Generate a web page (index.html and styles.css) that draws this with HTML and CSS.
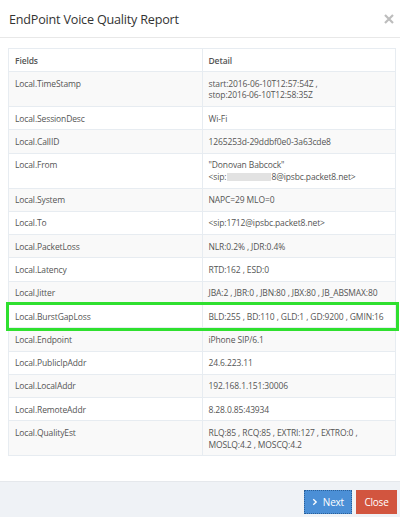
FILE: index.html
```html
<!DOCTYPE html>
<html>
<head>
<meta charset="utf-8">
<link rel="stylesheet" href="styles.css">
</head>
<body>
<div class="modal">
  <div class="modal-header">
    <h4 class="title">EndPoint Voice Quality Report</h4>
    <span class="close"><svg width="10" height="10" viewBox="0 0 10 10"><path d="M1 1L9 9M9 1L1 9" stroke="#bdbdbd" stroke-width="2.2" stroke-linecap="butt"/></svg></span>
  </div>
  <div class="modal-body">
    <table class="report">
      <thead>
        <tr><th>Fields</th><th>Detail</th></tr>
      </thead>
      <tbody>
        <tr><td>Local.TimeStamp</td><td>start:2016-06-10T12:57:54Z ,<br>stop:2016-06-10T12:58:35Z</td></tr>
        <tr><td>Local.SessionDesc</td><td>Wi-Fi</td></tr>
        <tr><td>Local.CallID</td><td>1265253d-29ddbf0e0-3a63cde8</td></tr>
        <tr><td>Local.From</td><td>"Donovan Babcock"<br>&lt;sip:<span class="redact"></span>8@ipsbc.packet8.net&gt;</td></tr>
        <tr><td>Local.System</td><td>NAPC=29 MLO=0</td></tr>
        <tr><td>Local.To</td><td>&lt;sip:1712@ipsbc.packet8.net&gt;</td></tr>
        <tr><td>Local.PacketLoss</td><td>NLR:0.2% , JDR:0.4%</td></tr>
        <tr><td>Local.Latency</td><td>RTD:162 , ESD:0</td></tr>
        <tr><td>Local.Jitter</td><td>JBA:2 , JBR:0 , JBN:80 , JBX:80 , JB_ABSMAX:80</td></tr>
        <tr class="highlight"><td>Local.BurstGapLoss</td><td>BLD:255 , BD:110 , GLD:1 , GD:9200 , GMIN:16</td></tr>
        <tr><td>Local.Endpoint</td><td>iPhone SIP/6.1</td></tr>
        <tr><td>Local.PublicIpAddr</td><td>24.6.223.11</td></tr>
        <tr><td>Local.LocalAddr</td><td>192.168.1.151:30006</td></tr>
        <tr><td>Local.RemoteAddr</td><td>8.28.0.85:43934</td></tr>
        <tr><td>Local.QualityEst</td><td>RLQ:85 , RCQ:85 , EXTRI:127 , EXTRO:0 ,<br>MOSLQ:4.2 , MOSCQ:4.2</td></tr>
      </tbody>
    </table>
  </div>
  <div class="modal-footer">
    <button class="btn btn-next"><svg width="7" height="8" viewBox="0 0 7 8"><path d="M1.5 0.8L5 4L1.5 7.2" fill="none" stroke="#fff" stroke-width="1.6"/></svg>Next</button>
    <button class="btn btn-close">Close</button>
  </div>
</div>
</body>
</html>
```

FILE: styles.css
```css
html, body {
  margin: 0;
  padding: 0;
  background: #fff;
}
body {
  font-family: "Open Sans", "DejaVu Sans", sans-serif;
  color: #555;
}
.modal {
  width: 400px;
  height: 517px;
  display: flex;
  flex-direction: column;
  background: #fff;
}
.modal-header {
  height: 38px;
  border-bottom: 1px solid #e8e8e8;
  display: flex;
  align-items: center;
  justify-content: space-between;
  padding: 0 6px 0 9px;
  box-sizing: border-box;
  flex: none;
}
.title {
  margin: 0;
  font-size: 12.6px;
  font-weight: 400;
  color: #333;
  letter-spacing: -0.2px;
  padding-top: 2px;
}
.close {
  display: flex;
  margin-right: 0;
}
.modal-body {
  flex: 1;
  padding: 10px 4px 0 8px;
}
.report {
  width: 100%;
  border-collapse: collapse;
  border: 1px solid #e7ecf1;
  font-size: 8.5px;
  letter-spacing: -0.12px;
  line-height: 11.6px;
  table-layout: fixed;
}
.report th, .report td {
  text-align: left;
  vertical-align: top;
  padding: 5.6px 6px 5.1px 6px;
  border: 1px solid #e7ecf1;
  width: 50%;
}
.report th {
  font-weight: 600;
  color: #555;
}
.report tbody tr:nth-child(odd) {
  background: #f9f9f9;
}
.report tr.highlight {
  outline: 3px solid #2fe02f;
  outline-offset: 0px;
}
.redact {
  display: inline-block;
  width: 44px;
  height: 8px;
  background: #e2e2e2;
  vertical-align: -1px;
  margin-left: 1px;
}
.modal-footer {
  flex: none;
  height: 36px;
  box-sizing: border-box;
  background: #eff2f6;
  border-top: 1px solid #e5e8ec;
  display: flex;
  justify-content: flex-end;
  align-items: flex-start;
  gap: 4px;
  padding: 8px 3px 0 0;
}
.btn {
  font-family: "Open Sans", "DejaVu Sans", sans-serif;
  font-size: 10px;
  height: 24px;
  border: none;
  color: #fff;
  padding: 0 8px;
  display: flex;
  align-items: center;
  gap: 5px;
  letter-spacing: -0.2px;
}
.btn-next {
  width: 48px;
  background: #4b8fd6;
  outline: 1px dotted #2a5f98;
  outline-offset: -1px;
  justify-content: center;
}
.btn-close {
  width: 41px;
  background: #d2553f;
  justify-content: center;
}
```
